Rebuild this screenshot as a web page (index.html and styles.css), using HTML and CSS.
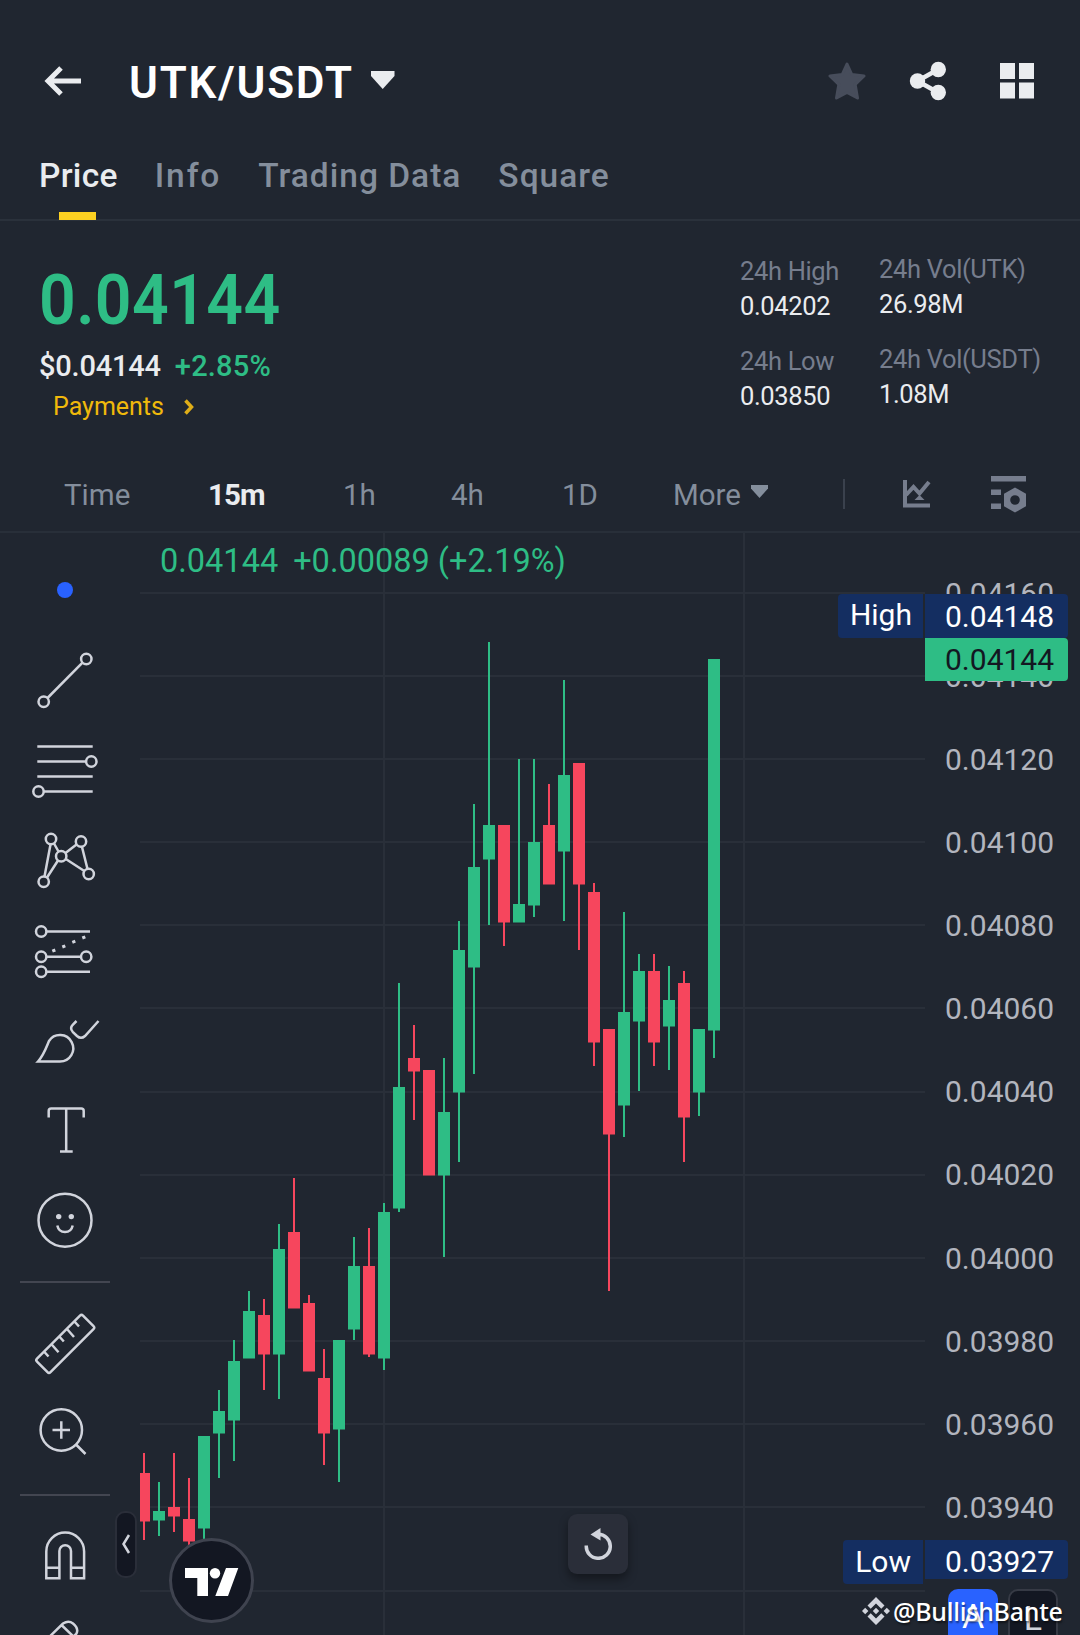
FILE: index.html
```
<!DOCTYPE html>
<html lang="en">
<head>
  <meta charset="UTF-8" />
  <meta name="viewport" content="width=device-width, initial-scale=1.0"/>
  <title>UTK/USDT</title>
  <link rel="stylesheet" href="styles.css">
</head>
<body>

  <!-- Header -->
  <header class="header">
    <svg class="back" width="38" height="32" viewBox="0 0 38 32"><path d="M17 3 4 16l13 13M4 16h33" fill="none" stroke="#eaecef" stroke-width="5"/></svg>
    <h1 class="pair">UTK/USDT</h1>
    <svg class="caret" width="24" height="18" viewBox="0 0 24 18"><path d="M0 0h23.500v5L11.700 18 0 5z" fill="#eaecef"/></svg>
    <div class="actions">
      <svg width="38" height="40" viewBox="0 0 38 40"><path d="M19 3l4.800 10.500L36 15l-8.800 8.400L29.500 37 19 31.500 8.500 37l2.300-13.600L2 15l12.200-1.500z" fill="#474d5b" stroke="#474d5b" stroke-width="3" stroke-linejoin="round"/></svg>
      <svg width="38" height="40" viewBox="0 0 38 40"><path d="M29 8.500 8.500 20 29 31.500" fill="none" stroke="#eaecef" stroke-width="4.500"/><g fill="#eaecef"><circle cx="8.500" cy="20" r="7.700"/><circle cx="29.300" cy="8.500" r="7.700"/><circle cx="29.300" cy="31.500" r="7.700"/></g></svg>
      <svg width="34" height="36" viewBox="0 0 34 36"><path d="M0 0h15v16H0zM19 0h15v16H19zM0 19.500h15v16H0zM19 19.500h15v16H19z" fill="#eaecef"/></svg>
    </div>
  </header>

  <nav class="tabs">
    <span class="tab active">Price</span>
    <span class="tab info">Info</span>
    <span class="tab">Trading Data</span>
    <span class="tab">Square</span>
  </nav>

  <!-- Ticker -->
  <section class="ticker">
    <div class="quote">
      <div class="last">0.04144</div>
      <div class="sub"><span class="usd">$0.04144</span><span class="change">+2.85%</span></div>
      <div class="tag">Payments <svg width="10" height="16" viewBox="0 0 10 16"><path d="M1.500 1.500 7.500 8l-6 6.500" fill="none" stroke="#dfae18" stroke-width="3.500"/></svg></div>
    </div>
    <div class="stats">
      <div class="stat"><span>24h High</span><b>0.04202</b></div>
      <div class="stat"><span>24h Low</span><b>0.03850</b></div>
    </div>
    <div class="stats vol">
      <div class="stat"><span>24h Vol(UTK)</span><b>26.98M</b></div>
      <div class="stat"><span>24h Vol(USDT)</span><b>1.08M</b></div>
    </div>
  </section>

  <!-- Intervals -->
  <nav class="intervals">
    <span>Time</span>
    <span class="active">15m</span>
    <span>1h</span>
    <span>4h</span>
    <span>1D</span>
    <span class="more">More <svg width="17" height="13" viewBox="0 0 17 13"><path d="M0 0h17v3.500L8.500 13 0 3.500z" fill="#848e9c"/></svg></span>
    <i class="divider"></i>
    <svg width="28" height="28" viewBox="0 0 28 28" fill="none" stroke="#767d8d"><path d="M2 0v25.500h25" stroke-width="4"/><path d="M3 15l7.500-8 6 6.500L26 2" stroke-width="4"/><path d="M11.500 20l5-5 5 5z" fill="#767d8d" stroke="none"/></svg>
    <svg width="36" height="38" viewBox="0 0 36 38" fill="#767d8d"><path d="M0 1h35v5.500H0zM0 14.500h10V20H0zM0 28.500h10V34H0z"/><path fill-rule="evenodd" d="M24 12.500l11 6.200v12.600l-11 6.200-11-6.200V18.700zM24 20.200a4.800 4.800 0 1 0 0 9.600 4.800 4.800 0 0 0 0-9.600z"/></svg>
  </nav>

  <!-- Chart -->
  <main class="chart">
    <aside class="toolbar">
      <div class="dot-wrap"><i class="dot"></i></div>
      <svg class="tool" viewBox="0 0 90 90"><circle cx="66.300" cy="24" r="5.200"/><circle cx="23.700" cy="66.700" r="5.200"/><path d="M27.500 63 62.500 27.700"/></svg>
      <svg class="tool" viewBox="0 0 90 90"><path d="M17.300 21.500h55.400M17.300 36.500H66M17.300 51.500h55.400M24 66.500h48.700"/><circle cx="71.300" cy="36.500" r="5.200"/><circle cx="18.500" cy="66.500" r="5.200"/></svg>
      <svg class="tool" viewBox="0 0 90 90"><path d="M34 28.500l4.500 8M45.500 38l11-8.500M45.800 44l18.500 12M38 45.500 27 62.500M30.500 29.500 24.500 61.500M62 32l5.500 22"/><circle cx="31" cy="24" r="5.200"/><circle cx="61" cy="26.500" r="5.200"/><circle cx="41.200" cy="41.300" r="5.200"/><circle cx="23.700" cy="66.700" r="5.200"/><circle cx="68.700" cy="59" r="5.200"/></svg>
      <svg class="tool" viewBox="0 0 90 90"><path d="M26.500 26.500H70M26.500 51.700H61M26.500 66.700H70"/><circle cx="21.200" cy="26.500" r="5.200"/><circle cx="21.200" cy="51.700" r="5.200"/><circle cx="66.200" cy="51.700" r="5.200"/><circle cx="21.200" cy="66.700" r="5.200"/><path d="M32.300 46.200l3-1.200M42.300 42l3-1.200M52.300 37.400l3-1.200M62.300 33l3-1.200" stroke-width="3"/></svg>
      <svg class="tool" viewBox="0 0 90 90"><path d="M18 66.500H40a13.200 13.200 0 1 0-11-20.500c-3.500 8.500-5.500 14.500-11 20.500zM56.500 26l-3.800 3.800q-3.200 3.200 0 7l4.300 4.200q4 3.600 8 0L78.500 26"/></svg>
      <svg class="tool" viewBox="0 0 90 90"><path d="M28.700 32.500V26q0-2.500 2.500-2.500h30q2.500 0 2.500 2.500v6.500M46.200 23.500v43M40 66.500h12.700"/></svg>
      <svg class="tool" viewBox="0 0 90 90"><circle cx="45" cy="45.200" r="26.500"/><path d="M37.300 50.500q1.400 6.500 7.700 6.500t7.700-6.500"/><g fill="#d1d4dc" stroke="none"><circle cx="38.700" cy="41.600" r="2.700"/><circle cx="51.300" cy="41.600" r="2.700"/></g></svg>
      <hr>
      <svg class="tool" viewBox="0 0 90 90"><path d="M60 17.700 17 60.700q-1.500 1.500 0 3l10.500 10.500q1.500 1.500 3 0l43-43q1.500-1.500 0-3L63 17.700q-1.500-1.500-3 0zM24 53.500l4.500 5M31.500 46.300l7 8M39.300 38.500l4.500 5M47 31l7 8M54.500 23.500l4.500 5"/></svg>
      <svg class="tool" viewBox="0 0 90 90"><circle cx="41.300" cy="42" r="20.700"/><path d="M32.500 42H50M41.300 33.200v17.500M56 56.500l9.500 9.500"/></svg>
      <hr>
      <svg class="tool" viewBox="0 0 90 90"><path d="M26.300 67.300V40.500a18.900 18.900 0 0 1 37.800 0v26.800H51V40a5.800 5.800 0 0 0-11.600 0v27.300zM26.300 56.700h13.100M51 56.700h13.100"/></svg>
      <svg class="tool" viewBox="0 0 90 90"><path d="M15 50 43 22.500q5.500-3.500 10 0 6 5 3.500 10L40 50M42 24.500l14 13.500"/></svg>
    </aside>

    <svg class="plot" id="plot" width="785" height="1102" viewBox="140 533 785 1102"></svg>

    <div class="axis" id="axis"></div>

    <div class="legend"><span>0.04144</span><span>+0.00089 (+2.19%)</span></div>

    <div class="mark high"><span>High</span><b>0.04148</b></div>
    <div class="mark now"><b>0.04144</b></div>
    <div class="mark low"><span>Low</span><b>0.03927</b></div>

    <div class="collapse"><svg width="10" height="20" viewBox="0 0 10 20"><path d="M8 1 2.500 10 8 19" fill="none" stroke="#d1d4dc" stroke-width="2.500"/></svg></div>
    <div class="tv"><svg width="54" height="28" viewBox="0 0 54 28" fill="#fff"><path d="M0 0h23v28H12.300V10H0zM41 0h12.300L43 28H30.300z"/><circle cx="30" cy="5.200" r="5.200"/></svg></div>
    <div class="reset"><svg width="28" height="32" viewBox="0 0 28 32"><path d="M2.300 17.500A12 12 0 1 0 14 6.300" fill="none" stroke="#d1d4dc" stroke-width="3.500"/><path d="M16.500 0v12.500L6.500 6.500z" fill="#d1d4dc"/></svg></div>

    <div class="scale auto">A</div>
    <div class="scale log">L</div>

    <div class="watermark">
      <svg width="28" height="28" viewBox="0 0 28 28" fill="#d1d4dc"><path d="M14 0l8.500 8.500-3.200 3.200L14 6.400l-5.300 5.300-3.200-3.200zM14 28l8.500-8.500-3.200-3.200L14 21.600l-5.300-5.300-3.200 3.200zM14 10.800l3.200 3.200-3.200 3.200-3.200-3.200zM3.200 10.800 6.400 14l-3.200 3.200L0 14zM24.800 10.800 28 14l-3.200 3.200-3.200-3.200z"/></svg>
      <span>@BullishBante</span>
    </div>
  </main>

  <script src="script.js"></script>
</body>
</html>
```
FILE: styles.css
```
* {
  box-sizing: border-box;
}

body {
  margin: 0;
  width: 1080px;
  height: 1635px;
  overflow: hidden;
  background: #202630;
  color: #eaecef;
  font-family: Roboto, "Liberation Sans", sans-serif;
}

svg {
  display: block;
  flex: none;
}

/* Header */
.header {
  display: flex;
  align-items: center;
  height: 150px;
  padding: 11px 46px 0 44px;
}

.pair {
  margin: 4px 17px 0 47px;
  font-size: 44px;
  font-weight: 600;
  line-height: 60px;
  letter-spacing: 1.75px;
  color: #fff;
}

.caret {
  margin-top: -1px;
}

.actions {
  display: flex;
  align-items: center;
  gap: 43px;
  margin-left: auto;
}

.actions svg:last-child {
  margin-left: 10px;
}

.tabs {
  display: flex;
  gap: 37px;
  height: 71px;
  padding-left: 39px;
  border-bottom: 2px solid #2a313b;
}

.tab {
  position: relative;
  font-size: 33.5px;
  font-weight: 500;
  line-height: 51px;
  letter-spacing: 1px;
  color: #848e9c;
}

.tab.active {
  letter-spacing: 0.3px;
  color: #eaecef;
}

.tab.info {
  letter-spacing: 1.9px;
}

.tab.active::after {
  content: "";
  position: absolute;
  left: 20px;
  bottom: -1px;
  width: 37px;
  height: 8px;
  background: #fcd021;
}

/* Ticker */
.ticker {
  display: flex;
  height: 241px;
}

.quote {
  width: 740px;
  padding: 40px 0 0 39px;
}

.last {
  font-size: 70px;
  font-weight: 600;
  line-height: 78px;
  letter-spacing: 0.4px;
  color: #2ebd85;
  transform: scaleX(0.92);
  transform-origin: left;
}

.sub {
  display: flex;
  gap: 14px;
  font-size: 29px;
  font-weight: 500;
  line-height: 54px;
}

.usd {
  letter-spacing: -0.2px;
}

.change {
  letter-spacing: 0.2px;
  color: #2ebd85;
}

.tag {
  display: flex;
  align-items: center;
  gap: 20px;
  padding-left: 14px;
  font-size: 25px;
  line-height: 28px;
  color: #f0b90b;
}

.stats {
  width: 139px;
  padding-top: 33px;
  white-space: nowrap;
}

.stats.vol {
  padding-top: 31px;
}

.stat {
  height: 90px;
  font-size: 25.5px;
  line-height: 35px;
  letter-spacing: -0.35px;
}

.stat span,
.stat b {
  display: block;
}

.stat span {
  color: #767d8d;
}

.stat b {
  font-weight: 400;
}

/* Intervals */
.intervals {
  display: grid;
  grid-template-columns: 144px 135px 108px 111px 111px 170px 60px 88px 36px;
  align-items: center;
  height: 71px;
  padding: 0 0 4px 64px;
  border-bottom: 2px solid #282f39;
  font-size: 29.5px;
  color: #848e9c;
}

.intervals .active {
  font-weight: 700;
  letter-spacing: -0.9px;
  color: #eaecef;
}

.intervals > svg {
  margin-top: -2px;
}

.more {
  display: flex;
  align-items: center;
  gap: 10px;
}

.more svg {
  margin-top: -6px;
}

.divider {
  width: 2px;
  height: 30px;
  margin-top: -2px;
  background: #3a414d;
}

/* Chart */
.chart {
  position: relative;
  display: grid;
  grid-template-columns: 140px 785px 155px;
  height: 1102px;
  overflow: hidden;
}

.toolbar {
  display: flex;
  flex-direction: column;
  padding-left: 20px;
  height: 1102px;
}

.dot-wrap {
  flex: none;
  height: 102px;
  padding: 49px 0 0 37px;
}

.dot {
  display: block;
  width: 16px;
  height: 16px;
  border-radius: 50%;
  background: #2962ff;
}

.tool {
  width: 90px;
  height: 90px;
  fill: none;
  stroke: #d1d4dc;
  stroke-width: 2.5;
}

.toolbar hr {
  flex: none;
  width: 90px;
  height: 2px;
  margin: 16px 0 15px;
  border: 0;
  background: #434651;
}

.axis {
  padding: 18.5px 0 0 20px;
}

.axis div {
  height: 83.15px;
  font-size: 30px;
  line-height: 84px;
  color: #b2b5be;
}

.legend {
  position: absolute;
  left: 160px;
  top: 8px;
  display: flex;
  gap: 15px;
  font-size: 32.5px;
  line-height: 40px;
  color: #2ebd85;
}

.mark {
  position: absolute;
  right: 12px;
  display: flex;
  gap: 2px;
  height: 44px;
  font-size: 30px;
  line-height: 45px;
  color: #fff;
}

.mark span {
  padding: 0 11px 0 12px;
  background: #142e61;
  border-radius: 4px 0 0 4px;
  line-height: 42px;
}

.mark b {
  width: 143px;
  padding-left: 20px;
  font-weight: 400;
  background: #142e61;
  border-radius: 0 4px 4px 0;
}

.mark.high {
  top: 61px;
}

.mark.high b {
  line-height: 46px;
}

.mark.now {
  top: 105px;
  height: 43px;
}

.mark.now b {
  background: #2ebd85;
  color: #131722;
  line-height: 44px;
}

.mark.low {
  top: 1006.5px;
}

.mark.low b {
  height: 39px;
  line-height: 44px;
}

.mark.low span {
  padding-right: 12px;
  line-height: 44px;
}

.collapse {
  position: absolute;
  left: 115px;
  top: 977.5px;
  display: flex;
  align-items: center;
  justify-content: center;
  width: 22px;
  height: 67px;
  border: 2px solid #2a2e39;
  border-radius: 10px;
  background: #131722;
}

.tv {
  position: absolute;
  left: 169px;
  top: 1005px;
  display: flex;
  align-items: center;
  justify-content: center;
  width: 85px;
  height: 85px;
  padding-top: 2px;
  border: 3px solid #3f434f;
  border-radius: 50%;
  background: #131722;
}

.reset {
  position: absolute;
  left: 568px;
  top: 981px;
  display: flex;
  align-items: center;
  justify-content: center;
  width: 60px;
  height: 60px;
  border-radius: 9px;
  background: #2a2e39;
  box-shadow: 0 5px 10px rgba(0, 0, 0, 0.4);
}

.scale {
  position: absolute;
  top: 1056px;
  width: 50px;
  height: 60px;
  border-radius: 10px;
  font-size: 34px;
  line-height: 55px;
  text-align: center;
}

.scale.auto {
  left: 948px;
  background: #2962ff;
  color: #fff;
}

.scale.log {
  left: 1008px;
  border: 2px solid #363a45;
  background: #131722;
  color: #d1d4dc;
}

.watermark {
  position: absolute;
  left: 862px;
  top: 1060px;
  display: flex;
  align-items: center;
  gap: 3px;
  font-family: "Noto Sans", sans-serif;
  font-size: 25px;
  font-weight: 500;
  line-height: 36px;
  letter-spacing: -0.25px;
  color: #fff;
  text-shadow: 1px 2px 2px rgba(0, 0, 0, 0.5);
}
```
FILE: script.js
```
// x, body top, body bottom, wick top, wick bottom, up
const candles = [
  [144, 1473, 1521, 1453, 1540, 0],
  [159, 1511, 1520, 1482, 1536, 1],
  [174, 1507, 1516, 1453, 1532, 0],
  [189, 1519, 1541, 1478, 1546, 0],
  [204, 1436, 1528, 1436, 1543, 1],
  [219, 1411, 1433, 1390, 1478, 1],
  [234, 1361, 1420, 1340, 1461, 1],
  [249, 1311, 1358, 1291, 1358, 1],
  [264, 1315, 1354, 1299, 1390, 0],
  [279, 1249, 1354, 1224, 1399, 1],
  [294, 1232, 1308, 1178, 1308, 0],
  [309, 1303, 1371, 1295, 1371, 0],
  [324, 1378, 1433, 1349, 1465, 0],
  [339, 1340, 1429, 1340, 1482, 1],
  [354, 1266, 1329, 1237, 1340, 1],
  [369, 1266, 1354, 1228, 1357, 0],
  [384, 1212, 1358, 1203, 1370, 1],
  [399, 1087, 1208, 983, 1212, 1],
  [414, 1058, 1071, 1025, 1120, 0],
  [429, 1070, 1175, 1070, 1175, 0],
  [444, 1112, 1175, 1058, 1257, 1],
  [459, 950, 1092, 921, 1162, 1],
  [474, 867, 967, 804, 1074, 1],
  [489, 825, 859, 642, 925, 1],
  [504, 825, 922, 825, 946, 0],
  [519, 904, 922, 759, 922, 1],
  [534, 842, 905, 759, 917, 1],
  [549, 825, 884, 784, 884, 0],
  [564, 775, 851, 680, 921, 1],
  [579, 763, 884, 763, 950, 0],
  [594, 892, 1042, 883, 1066, 0],
  [609, 1029, 1134, 1029, 1291, 0],
  [624, 1012, 1105, 912, 1137, 1],
  [639, 971, 1021, 954, 1091, 1],
  [654, 971, 1042, 954, 1066, 0],
  [669, 1000, 1026, 966, 1070, 1],
  [684, 983, 1117, 971, 1162, 0],
  [699, 1029, 1092, 1029, 1116, 1],
  [714, 659, 1030, 659, 1058, 1]
];

const rect = (x, y, w, h, fill) =>
  `<rect x="${x}" y="${y}" width="${w}" height="${h}" fill="${fill}"/>`;

let out = '';

// grid
for (let i = 0; i < 13; i++) {
  out += rect(140, Math.round(591.7 + i * 83.15), 785, 2, '#292f39');
}
out += rect(383, 533, 2, 1102, '#292f39');
out += rect(743, 533, 2, 1102, '#292f39');

candles.forEach(([x, top, bottom, high, low, up]) => {
  const color = up ? '#2ebd85' : '#f6465d';
  out += rect(x - 1, high, 2, low - high, color);
  out += rect(x - 6, top, 12, bottom - top + 0.5, color);
});
document.getElementById('plot').innerHTML = out;

// price labels
let labels = '';
for (let p = 4160; p >= 3940; p -= 20) {
  labels += `<div>0.0${p}</div>`;
}
document.getElementById('axis').innerHTML = labels;
```
